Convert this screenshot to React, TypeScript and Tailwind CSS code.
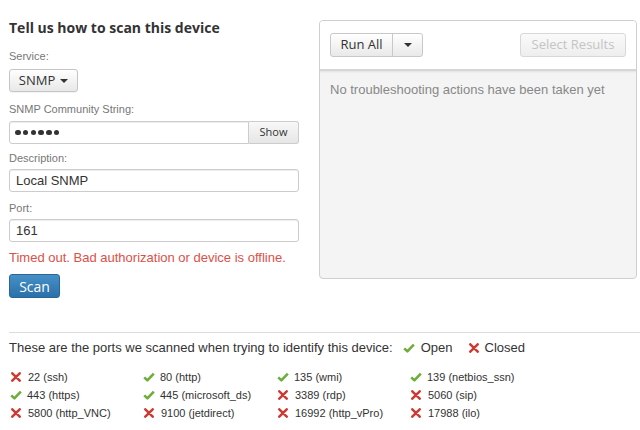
import React from "react";

const Check = ({ className = "" }: { className?: string }) => (
  <svg viewBox="0 0 12 10" className={"w-[12px] h-[10px] shrink-0 " + className}>
    <path d="M1.2 5.4 L4.4 8.3 L10.8 1.6" fill="none" stroke="#6fae3d" strokeWidth="2.6" strokeLinejoin="round" />
  </svg>
);

const Cross = ({ className = "" }: { className?: string }) => (
  <svg viewBox="0 0 10 10" className={"w-[10px] h-[10px] shrink-0 " + className}>
    <path d="M1.3 1.3 L8.7 8.7 M8.7 1.3 L1.3 8.7" fill="none" stroke="#cc3b33" strokeWidth="2.5" strokeLinecap="round" />
  </svg>
);

const Caret = ({ color = "#333" }: { color?: string }) => (
  <svg viewBox="0 0 8 4" className="w-[8px] h-[4px]">
    <path d="M0 0 L8 0 L4 4 Z" fill={color} />
  </svg>
);

const ports: [boolean, string][] = [
  [false, "22 (ssh)"],
  [true, "80 (http)"],
  [true, "135 (wmi)"],
  [true, "139 (netbios_ssn)"],
  [true, "443 (https)"],
  [true, "445 (microsoft_ds)"],
  [false, "3389 (rdp)"],
  [false, "5060 (sip)"],
  [false, "5800 (http_VNC)"],
  [false, "9100 (jetdirect)"],
  [false, "16992 (http_vPro)"],
  [false, "17988 (ilo)"],
];

const label = "text-[11px] leading-[14px] text-[#777] font-['Liberation_Sans',Arial,sans-serif]";
const inputBox =
  "h-[23px] border border-[#ccc] rounded-[3px] bg-white shadow-[inset_0_1px_1px_rgba(0,0,0,0.075)] flex items-center pl-[6px] text-[13px] text-[#333] font-['Liberation_Sans',Arial,sans-serif]";

export default function App() {
  return (
    <div className="w-[640px] h-[430px] bg-white overflow-hidden font-['Liberation_Sans',Arial,sans-serif] text-[#333]">
      <div className="flex pl-[9px] pt-[18px]">
        {/* Left column */}
        <div className="w-[290px] flex flex-col">
          <div className="h-[20px] leading-[20px] text-[14px] font-bold text-[#333] font-['Open_Sans',sans-serif] whitespace-nowrap">
            Tell us how to scan this device
          </div>
          <div className={label + " mt-[11px]"}>Service:</div>
          <div className="mt-[6px] h-[23px] w-[69px] flex items-center justify-center gap-[5px] border border-[#c5c5c5] rounded-[3px] bg-gradient-to-b from-white to-[#e8e8e8] text-[13px] text-[#333] font-['Open_Sans',sans-serif] shadow-[0_1px_1px_rgba(0,0,0,0.05)]">
            <span>SNMP</span>
            <Caret />
          </div>
          <div className={label + " mt-[10px]"}>SNMP Community String:</div>
          <div className="mt-[5px] flex h-[23px]">
            <div className="flex-1 h-full border border-[#ccc] rounded-l-[3px] bg-white shadow-[inset_0_1px_1px_rgba(0,0,0,0.075)] flex items-center gap-[2px] pl-[5px]">
              {[0, 1, 2, 3, 4, 5].map((i) => (
                <span key={i} className="w-[5.5px] h-[5.5px] rounded-full bg-[#333] mr-[0.3px]" />
              ))}
            </div>
            <div className="w-[50px] h-full border border-l-0 border-[#ccc] rounded-r-[3px] bg-gradient-to-b from-[#f8f8f8] to-[#e6e6e6] flex items-center justify-center text-[11px] text-[#333] font-['Open_Sans',sans-serif]">
              Show
            </div>
          </div>
          <div className={label + " mt-[7px]"}>Description:</div>
          <div className={inputBox + " mt-[4px]"}>Local SNMP</div>
          <div className={label + " mt-[9px]"}>Port:</div>
          <div className={inputBox + " mt-[4px]"}>161</div>
          <div className="mt-[6px] h-[20px] leading-[20px] text-[13px] text-[#dc5048] whitespace-nowrap">
            Timed out. Bad authorization or device is offline.
          </div>
          <div className="mt-[6px] h-[24px] w-[51px] rounded-[3px] border border-[#2a6698] bg-gradient-to-b from-[#4690c8] to-[#2c70a8] flex items-center justify-center text-[14px] text-white font-['Open_Sans',sans-serif]">
            Scan
          </div>
        </div>

        {/* Right panel */}
        <div className="ml-[20px] mt-[2px] w-[318px] h-[259px] border border-[#cfcfcf] rounded-[4px] bg-[#f4f4f4] flex flex-col overflow-hidden">
          <div className="bg-white h-[50px] px-[10px] pt-[12px] flex justify-between border-b-2 border-[#d6d6d6] shadow-[0_1px_2px_rgba(0,0,0,0.08)]">
            <div className="flex h-[24px] border border-[#c8c8c8] rounded-[3px] bg-gradient-to-b from-white to-[#e9e9e9] text-[13px] text-[#333] font-['Open_Sans',sans-serif]">
              <div className="w-[62px] flex items-center justify-center border-r border-[#c8c8c8]">Run All</div>
              <div className="w-[29px] flex items-center justify-center">
                <Caret />
              </div>
            </div>
            <div className="w-[106px] h-[24px] border border-[#d8d8d8] rounded-[3px] bg-gradient-to-b from-[#fafafa] to-[#eeeeee] flex items-center justify-center text-[13px] text-[#c4c4c4] font-['Open_Sans',sans-serif]">
              Select Results
            </div>
          </div>
          <div className="px-[10px] pt-[9px] h-[20px] leading-[20px] text-[13px] text-[#888] whitespace-nowrap box-content">
            No troubleshooting actions have been taken yet
          </div>
        </div>
      </div>

      {/* Bottom */}
      <div className="ml-[9px] mt-[34px] border-t border-[#dcdcdc]">
        <div className="mt-[5px] h-[20px] leading-[20px] text-[13px] text-[#333] flex items-center whitespace-nowrap">
          <span>These are the ports we scanned when trying to identify this device:</span>
          <Check className="ml-[10px]" />
          <span className="ml-[6px]">Open</span>
          <Cross className="ml-[16px]" />
          <span className="ml-[6px]">Closed</span>
        </div>
        <div className="mt-[10px] ml-[2px] grid grid-cols-[133px_134px_133px_134px]">
          {ports.map(([open, name], i) => (
            <div key={i} className="h-[18px] flex items-center text-[11px] text-[#333] whitespace-nowrap">
              {open ? <Check className="-ml-[1px]" /> : <Cross />}
              <span className={open ? "ml-[5px]" : "ml-[7px]"}>{name}</span>
            </div>
          ))}
        </div>
      </div>
    </div>
  );
}
